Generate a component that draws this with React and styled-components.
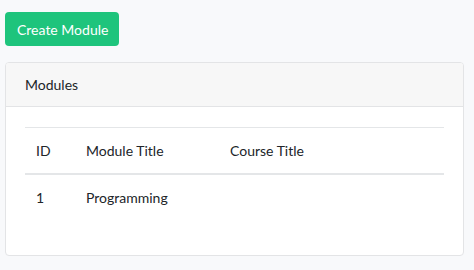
import React from "react";
import styled, { createGlobalStyle } from "styled-components";

const GlobalStyle = createGlobalStyle`
  body {
    margin: 0;
    background: #f8f9fb;
    font-family: Lato, "Open Sans", sans-serif;
    color: #212529;
  }
`;

const Page = styled.div`
  padding: 12px 10px 16px 5px;
`;

const Button = styled.button`
  display: inline-block;
  height: 34px;
  padding: 0 11px 0 12px;
  border: none;
  border-radius: 4px;
  background: #1ec47c;
  color: #fff;
  font-family: inherit;
  font-size: 14px;
  cursor: pointer;
`;

const Card = styled.div`
  margin-top: 16px;
  background: #fff;
  border: 1px solid #e3e4e6;
  border-radius: 4px;
  overflow: hidden;
`;

const CardHeader = styled.div`
  height: 43px;
  display: flex;
  align-items: center;
  padding: 0 19px;
  background: #f7f7f7;
  border-bottom: 1px solid #e3e4e6;
  font-size: 14px;
`;

const CardBody = styled.div`
  padding: 20px 19px 20px;
`;

const Table = styled.table`
  width: 100%;
  border-collapse: collapse;
  margin-bottom: 15px;
  font-size: 14px;
`;

const Cell = styled.td`
  height: 45px;
  padding: 0 11px;
  border-top: 1px solid #e4e6e8;
  border-bottom: ${(p) => (p.$head ? "2px solid #e4e6e8" : "none")};
  text-align: left;
  font-weight: 400;
  width: ${(p) => p.$w || "auto"};
`;

const modules = [{ id: 1, title: "Programming", course: "" }];

export default function App() {
  return (
    <>
      <GlobalStyle />
      <Page>
        <Button>Create Module</Button>
        <Card>
          <CardHeader>Modules</CardHeader>
          <CardBody>
            <Table>
              <thead>
                <tr>
                  <Cell as="th" $head $w="28px">ID</Cell>
                  <Cell as="th" $head $w="122px">Module Title</Cell>
                  <Cell as="th" $head>Course Title</Cell>
                </tr>
              </thead>
              <tbody>
                {modules.map((m) => (
                  <tr key={m.id}>
                    <Cell>{m.id}</Cell>
                    <Cell>{m.title}</Cell>
                    <Cell>{m.course}</Cell>
                  </tr>
                ))}
              </tbody>
            </Table>
          </CardBody>
        </Card>
      </Page>
    </>
  );
}
